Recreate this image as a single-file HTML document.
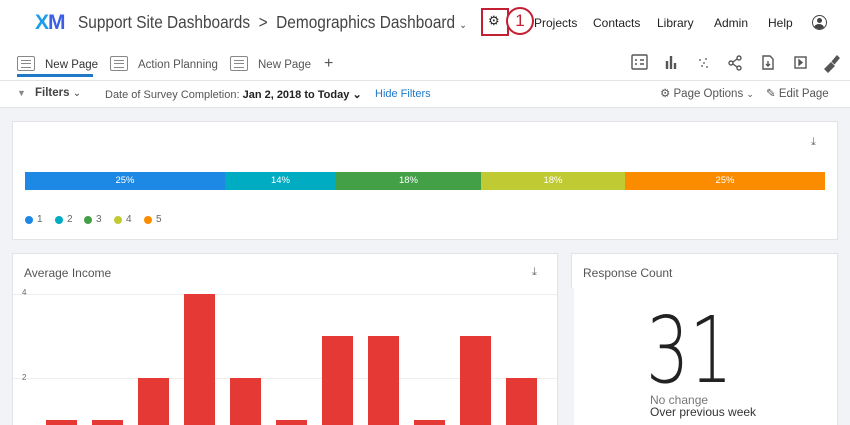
<!DOCTYPE html>
<html><head><meta charset="utf-8">
<style>
*{margin:0;padding:0;box-sizing:border-box}
html{width:850px;height:425px;overflow:hidden}
body{width:850px;height:425px;overflow:hidden;background:#f2f3f6;font-family:"Liberation Sans",sans-serif;position:relative;color:#333}
.abs{position:absolute}
.top{left:0;top:0;width:850px;height:80px;background:#fff}
.nav{font-size:12px;color:#222;top:16px}
.tab{font-size:11.5px;color:#555;top:59px}
.doc{width:18px;height:15px;border:1px solid #888;border-radius:2px;top:56px}
.doc:before{content:"";position:absolute;left:3px;right:3px;top:3px;height:6px;border-top:1px solid #888;border-bottom:1px solid #888}
.doc:after{content:"";position:absolute;left:3px;right:3px;top:6px;border-top:1px solid #888}
.fbar{left:0;top:80px;width:850px;height:28px;background:#fff;border-top:1px solid #e4e4e4;border-bottom:1px solid #e4e4e4}
.card{background:#fff;border:1px solid #e2e3e6;border-bottom:none}
.seg{top:172px;height:18px;color:#fff;font-size:9.5px;text-align:center;line-height:18px}
.dot{width:8px;height:8px;border-radius:50%;top:216px}
.lg{top:214px;font-size:10px;color:#666}
.bar{background:#e53935;width:31px;bottom:0}
</style></head><body>
<div class="abs top"></div>
<div class="abs" style="left:35px;top:11px;font-size:21px;font-weight:bold;letter-spacing:-1px;color:#1a9ee8">X<span style="color:#3b5fe6">M</span></div>
<div class="abs" style="left:78px;top:12px;font-size:17.5px;color:#444;white-space:nowrap;transform:scaleX(0.88);transform-origin:left">Support Site Dashboards&nbsp;&nbsp;&gt;&nbsp;&nbsp;Demographics Dashboard <span style="font-size:10px">&#8964;</span></div>
<div class="abs" style="left:481px;top:8px;width:28px;height:28px;border:2.5px solid #c31f32"></div>
<div class="abs" style="left:488px;top:13px;font-size:13px;color:#222">&#9881;</div>
<div class="abs" style="left:506px;top:7px;width:28px;height:28px;border:2px solid #c31f32;border-radius:50%;background:#fff;color:#c31f32;font-size:17px;text-align:center;line-height:24px">1</div>
<div class="abs nav" style="left:534px">Projects</div>
<div class="abs nav" style="left:593px">Contacts</div>
<div class="abs nav" style="left:657px">Library</div>
<div class="abs nav" style="left:714px">Admin</div>
<div class="abs nav" style="left:768px">Help</div>
<div class="abs" style="left:812px;top:15px;width:15px;height:15px;border:1.6px solid #444;border-radius:50%;overflow:hidden"><div class="abs" style="left:3.5px;top:2px;width:5px;height:5px;background:#444;border-radius:50%"></div><div class="abs" style="left:1px;top:8px;width:10px;height:8px;background:#444;border-radius:50%"></div></div>
<div class="abs doc" style="left:17px"></div><div class="abs tab" style="left:45px;color:#333">New Page</div>
<div class="abs" style="left:17px;top:74px;width:76px;height:3px;background:#1f78c8"></div>
<div class="abs doc" style="left:110px"></div><div class="abs tab" style="left:138px">Action Planning</div>
<div class="abs doc" style="left:230px"></div><div class="abs tab" style="left:258px">New Page</div>
<div class="abs" style="left:324px;top:55px;font-size:16px;color:#555">+</div>
<svg class="abs" style="left:625px;top:52px" width="220" height="22" fill="none" stroke="#555" stroke-width="1.4">
<rect x="7" y="3" width="15" height="14" rx="1"/><path d="M10 8h2M15 8h4M10 12h2M15 12h4"/>
<path d="M42 17V9M46 17V4M50 17V11" stroke-width="2.4"/>
<g fill="#777" stroke="none"><circle cx="75" cy="8" r="1"/><circle cx="79" cy="11" r="1"/><circle cx="77" cy="14" r="1"/><circle cx="82" cy="15" r="1"/><circle cx="81" cy="7" r="1"/></g>
<circle cx="106" cy="11" r="2"/><circle cx="114" cy="6" r="2"/><circle cx="114" cy="16" r="2"/><path d="M108 10l4-3M108 12l4 3"/>
<path d="M138 4h7l3 3v10h-10z"/><path d="M143 9v5M141 12l2 2 2-2"/>
<rect x="170" y="5" width="11" height="11"/><path d="M174 8v5l3-2.5z" fill="#555"/>
<path d="M200 17l6-6 3 3-6 6zM207 10l5-6 2 2-5 6" fill="#555"/>
</svg>
<div class="abs fbar"></div>
<div class="abs" style="left:17px;top:88px;font-size:9px;color:#888">&#9660;</div>
<div class="abs" style="left:35px;top:87px;font-size:11.5px;color:#444;font-weight:bold">Filters <span style="font-weight:normal;font-size:10px">&#8964;</span></div>
<div class="abs" style="left:105px;top:88px;font-size:11px;color:#555">Date of Survey Completion: <b style="color:#222">Jan 2, 2018 to Today</b> <b style="color:#222">&#8964;</b></div>
<div class="abs" style="left:375px;top:88px;font-size:11px;color:#1f78c8">Hide Filters</div>
<div class="abs" style="left:660px;top:86px;font-size:11.5px;color:#555">&#9881; Page Options <span style="font-size:9px">&#8964;</span></div>
<div class="abs" style="left:766px;top:86px;font-size:11.5px;color:#555">&#9998; Edit Page</div>

<div class="abs card" style="left:12px;top:121px;width:826px;height:119px;border-bottom:1px solid #e2e3e6"></div>
<div class="abs" style="left:811px;top:136px;font-size:11px;color:#666">&#10515;</div>
<div class="abs seg" style="left:25px;width:200px;background:#1e88e5">25%</div>
<div class="abs seg" style="left:225px;width:111px;background:#00acc1">14%</div>
<div class="abs seg" style="left:336px;width:145px;background:#43a047">18%</div>
<div class="abs seg" style="left:481px;width:144px;background:#c0ca33">18%</div>
<div class="abs seg" style="left:625px;width:200px;background:#fb8c00">25%</div>
<div class="abs dot" style="left:25px;background:#1e88e5"></div><div class="abs lg" style="left:37px">1</div>
<div class="abs dot" style="left:55px;background:#00acc1"></div><div class="abs lg" style="left:67px">2</div>
<div class="abs dot" style="left:84px;background:#43a047"></div><div class="abs lg" style="left:96px">3</div>
<div class="abs dot" style="left:114px;background:#c0ca33"></div><div class="abs lg" style="left:126px">4</div>
<div class="abs dot" style="left:144px;background:#fb8c00"></div><div class="abs lg" style="left:156px">5</div>

<div class="abs card" style="left:12px;top:253px;width:546px;bottom:0"></div>
<div class="abs" style="left:24px;top:266px;font-size:12px;color:#555">Average Income</div>
<div class="abs" style="left:532px;top:266px;font-size:11px;color:#666">&#10515;</div>
<div class="abs" style="left:13px;top:294px;width:544px;height:1px;background:#eee"></div>
<div class="abs" style="left:13px;top:378px;width:544px;height:1px;background:#eee"></div>
<div class="abs" style="left:22px;top:288px;font-size:8px;color:#666">4</div>
<div class="abs" style="left:22px;top:373px;font-size:8px;color:#666">2</div>
<div class="abs bar" style="left:46px;top:420px"></div>
<div class="abs bar" style="left:92px;top:420px"></div>
<div class="abs bar" style="left:138px;top:378px"></div>
<div class="abs bar" style="left:184px;top:294px"></div>
<div class="abs bar" style="left:230px;top:378px"></div>
<div class="abs bar" style="left:276px;top:420px"></div>
<div class="abs bar" style="left:322px;top:336px"></div>
<div class="abs bar" style="left:368px;top:336px"></div>
<div class="abs bar" style="left:414px;top:420px"></div>
<div class="abs bar" style="left:460px;top:336px"></div>
<div class="abs bar" style="left:506px;top:378px"></div>

<div class="abs card" style="left:571px;top:253px;width:267px;bottom:0"></div>
<div class="abs" style="left:583px;top:266px;font-size:12px;color:#555">Response Count</div>
<div class="abs" style="left:571px;top:288px;width:3px;bottom:0;background:#f2f3f6"></div>
<div class="abs" style="left:646px;top:296px;font-family:'DejaVu Sans',sans-serif;font-size:92px;font-weight:200;color:#222;line-height:110px;white-space:nowrap;transform:scaleX(0.74);transform-origin:left">31</div>
<div class="abs" style="left:650px;top:393px;font-size:12px;color:#777">No change</div>
<div class="abs" style="left:650px;top:405px;font-size:12px;color:#333">Over previous week</div>
</body></html>
